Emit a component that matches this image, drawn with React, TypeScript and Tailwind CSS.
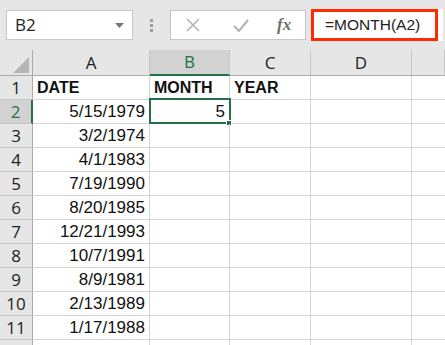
import React from "react";

const cols = [
  { key: "A", w: "w-[117px]" },
  { key: "B", w: "w-[80px]" },
  { key: "C", w: "w-[81px]" },
  { key: "D", w: "w-[101px]" },
  { key: "E", w: "flex-1" },
];

const dates = [
  "5/15/1979",
  "3/2/1974",
  "4/1/1983",
  "7/19/1990",
  "8/20/1985",
  "12/21/1993",
  "10/7/1991",
  "8/9/1981",
  "2/13/1989",
  "1/17/1988",
];

const cellFont = { fontFamily: '"Liberation Sans", Arial, sans-serif' };
const uiFont = { fontFamily: '"Open Sans", "Noto Sans", sans-serif' };

const TopBar = () => (
  <div className="h-[50px] bg-[#e6e6e6] flex items-start pt-[10px]" style={uiFont}>
    <div className="ml-[6px] w-[127px] h-[30px] bg-white border border-[#c6c6c6] flex items-center justify-between pl-[8px] pr-[8px]">
      <span className="text-[17px] text-[#222]">B2</span>
      <svg width="9" height="5" viewBox="0 0 9 5">
        <path d="M0 0 L9 0 L4.5 5 Z" fill="#777" />
      </svg>
    </div>
    <div className="w-[37px] h-[30px] flex flex-col items-center justify-center gap-[2px]">
      <span className="w-[3px] h-[3px] bg-[#9e9e9e]" />
      <span className="w-[3px] h-[3px] bg-[#9e9e9e]" />
      <span className="w-[3px] h-[3px] bg-[#9e9e9e]" />
    </div>
    <div className="w-[136px] h-[30px] bg-white border border-[#c6c6c6] flex items-center">
      <svg className="ml-[15px]" width="14" height="14" viewBox="0 0 14 14">
        <path d="M1 1 L13 13 M13 1 L1 13" stroke="#b3b3b3" strokeWidth="1.6" />
      </svg>
      <svg className="ml-[33px]" width="16" height="13" viewBox="0 0 16 13">
        <path d="M1 7 L6 12 L15 1" stroke="#b3b3b3" strokeWidth="2" fill="none" />
      </svg>
      <span
        className="ml-[28px] text-[17px] italic text-[#6e6e6e] font-bold"
        style={{ fontFamily: '"Liberation Serif", "Times New Roman", serif' }}
      >
        fx
      </span>
    </div>
    <div className="ml-[5px] w-[132px] h-[32px] -mt-[1px] bg-white">
      <div className="w-[127px] h-full border-[3px] border-[#ff2a00] flex items-center pl-[11px]">
        <span className="text-[15.5px] text-[#222]" style={cellFont}>
          =MONTH(A2)
        </span>
      </div>
    </div>
  </div>
);

const HeaderRow = () => (
  <div className="flex h-[26px] bg-[#e6e6e6] border-b border-[#ababab]" style={uiFont}>
    <div className="w-[33px] border-r border-[#ababab] flex items-end justify-end pr-[3px] pb-[2px]">
      <svg width="16" height="16" viewBox="0 0 16 16">
        <path d="M16 0 L16 16 L0 16 Z" fill="#b6b6b6" />
      </svg>
    </div>
    {cols.map((c) =>
      c.key === "B" ? (
        <div
          key={c.key}
          className={`${c.w} bg-[#d2d2d2] border-r border-[#c6c6c6] border-b-2 border-b-[#217346] flex items-center justify-center text-[17px] text-[#217346] -mb-px`}
        >
          {c.key}
        </div>
      ) : (
        <div
          key={c.key}
          className={`${c.w} border-r border-[#c6c6c6] flex items-center justify-center text-[17px] text-[#222]`}
        >
          {c.key === "E" ? "" : c.key}
        </div>
      )
    )}
  </div>
);

const Row = ({ n, a, b, c, bold }: { n: number | null; a: string; b: string; c: string; bold?: boolean }) => {
  const active = n === 2;
  return (
    <div className="flex h-[24px]">
      <div
        className={
          active
            ? "w-[33px] bg-[#d2d2d2] border-r-2 border-[#217346] border-b border-b-[#c6c6c6] flex items-center justify-center text-[17px] text-[#217346]"
            : "w-[33px] bg-[#e6e6e6] border-r border-[#ababab] border-b border-b-[#c6c6c6] flex items-center justify-center text-[17px] text-[#222]"
        }
        style={uiFont}
      >
        {n}
      </div>
      <div
        className={`w-[117px] border-r border-b border-[#d4d4d4] flex items-end px-[4px] pb-[3px] leading-none text-[#111] ${
          bold ? "justify-start font-bold text-[16px]" : "justify-end text-[17px]"
        }`}
        style={cellFont}
      >
        {a}
      </div>
      <div
        className={`relative w-[80px] border-r border-b border-[#d4d4d4] flex items-end px-[4px] pb-[3px] leading-none text-[#111] ${
          bold ? "justify-start font-bold text-[16px]" : "justify-end text-[17px]"
        }`}
        style={cellFont}
      >
        {b}
        {active && (
          <>
            <div className="absolute -left-[1px] -top-[2px] w-[82px] h-[26px] border-2 border-[#217346]" />
            <div className="absolute -right-[3px] -bottom-[3px] w-[6px] h-[6px] bg-[#217346] border border-white" />
          </>
        )}
      </div>
      <div
        className="w-[81px] border-r border-b border-[#d4d4d4] flex items-end px-[4px] pb-[3px] leading-none font-bold text-[16px] text-[#111]"
        style={cellFont}
      >
        {c}
      </div>
      <div className="w-[101px] border-r border-b border-[#d4d4d4]" />
      <div className="flex-1 border-b border-[#d4d4d4]" />
    </div>
  );
};

export default function App() {
  return (
    <div className="w-[445px] h-[345px] overflow-hidden bg-white">
      <TopBar />
      <HeaderRow />
      <Row n={1} a="DATE" b="MONTH" c="YEAR" bold />
      {dates.map((d, i) => (
        <Row key={d} n={i + 2} a={d} b={i === 0 ? "5" : ""} c="" />
      ))}
      <Row n={null} a="" b="" c="" />
    </div>
  );
}
